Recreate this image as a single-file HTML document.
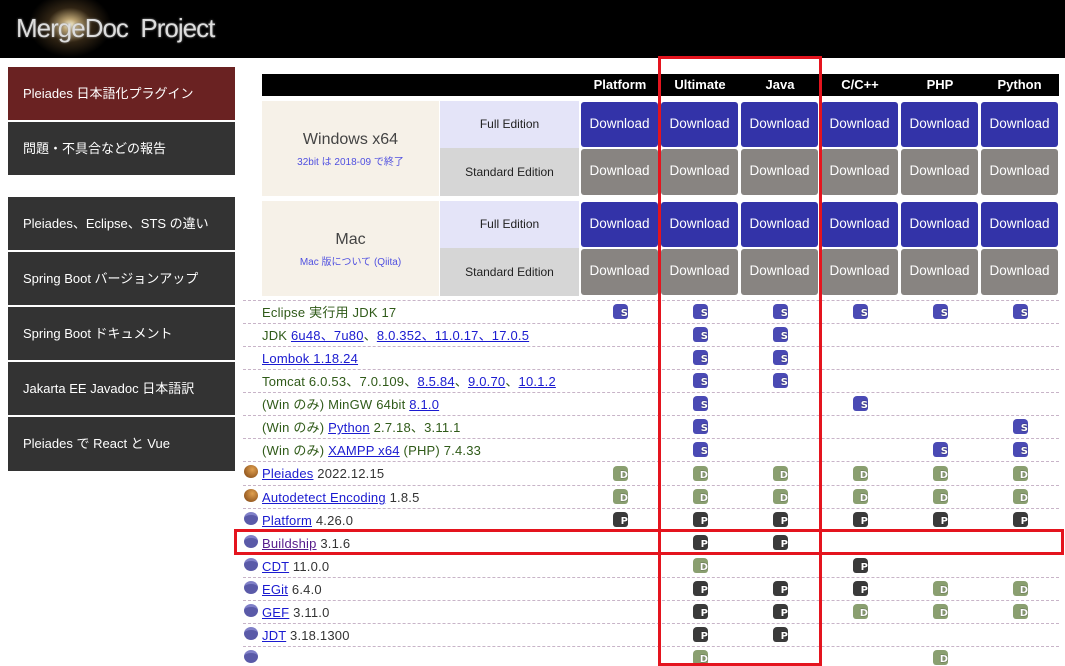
<!DOCTYPE html>
<html><head><meta charset="utf-8">
<style>
*{margin:0;padding:0;box-sizing:border-box}
body{width:1065px;height:653px;overflow:hidden;background:#fff;position:relative;font-family:"Liberation Sans","Noto Sans CJK JP",sans-serif;font-size:13px}
.a{position:absolute}
#hdr{left:0;top:0;width:1065px;height:58px;background:#000}
#glow{left:25px;top:-10px;width:90px;height:70px;background:radial-gradient(ellipse at center,rgba(255,250,220,1) 0,rgba(230,200,140,.8) 12%,rgba(120,90,50,.4) 35%,rgba(0,0,0,0) 65%)}
#title{left:16px;top:13px;color:#ddd;font-size:26px;letter-spacing:-1px;text-shadow:0 0 2px #888}
.side{left:8px;width:227px;height:53px;background:#333;color:#fff;font-size:13px;padding-left:15px;line-height:53px}
.th{top:74px;height:22px;background:#000;color:#fff;font-weight:bold;font-size:13px;line-height:22px;text-align:center}
.btn{width:77px;color:#fff;border-radius:3px;text-align:center;font-size:13.5px}
.bl{background:#3333a8;height:45px;line-height:44px}
.gr{background:#888481;height:46px;line-height:44px}
.os{left:262px;width:177px;height:94px;background:#f6f1e8;text-align:center;color:#444}
.fe{left:440px;width:139px;background:#e4e4f8;text-align:center;color:#222;font-size:12px}
.se{left:440px;width:139px;background:#d6d6d6;text-align:center;color:#222;font-size:12px}
.ln{left:243px;width:816px;height:0;border-top:1px dashed #c8b4c8}
.rt{left:262px;font-size:13px;color:#2f5a18;line-height:23px;white-space:nowrap;letter-spacing:0.2px}
.rt a{color:#1a1ad0;text-decoration:underline}
.rt .k{color:#333}
.ic{width:15px;height:15px;border-radius:4px 4px 3px 3px;font-size:10px;font-weight:bold;color:#fff;text-align:right;line-height:10px;padding-top:5px;padding-right:0;font-family:"DejaVu Sans",sans-serif;text-shadow:0 0 1px #000}
.S{background:#4a4ab4}
.D{background:#8a9f70}
.P{background:#3a3a3a}
.eb{left:244px;width:14px;height:13px;border-radius:50%;background:#5a5aa8;border-top:3px solid #8080c8}
.pb{left:244px;width:14px;height:13px;border-radius:50%;background:radial-gradient(circle at 60% 35%,#e0a050,#7a4010)}
.red{border:3px solid #e4141e}
</style></head><body>
<div id="hdr" class="a"></div>
<div id="glow" class="a"></div>
<div id="title" class="a">MergeDoc&nbsp; Project</div>

<div class="a side" style="top:67px;background:#6a2222">Pleiades 日本語化プラグイン</div>
<div class="a side" style="top:122px">問題・不具合などの報告</div>
<div class="a side" style="top:197px">Pleiades、Eclipse、STS の違い</div>
<div class="a side" style="top:252px">Spring Boot バージョンアップ</div>
<div class="a side" style="top:307px">Spring Boot ドキュメント</div>
<div class="a side" style="top:362px">Jakarta EE Javadoc 日本語訳</div>
<div class="a side" style="top:417px;height:54px">Pleiades で React と Vue</div>

<div class="a th" style="left:262px;width:318px"></div>
<div class="a th" style="left:580px;width:80px">Platform</div>
<div class="a th" style="left:660px;width:80px">Ultimate</div>
<div class="a th" style="left:740px;width:80px">Java</div>
<div class="a th" style="left:820px;width:80px">C/C++</div>
<div class="a th" style="left:900px;width:80px">PHP</div>
<div class="a th" style="left:980px;width:79px">Python</div>

<div class="a os" style="top:101px;height:95px;padding-top:30px"><div style="font-size:16px">Windows x64</div><div style="font-size:10px;color:#5050e0;margin-top:4px">32bit は 2018-09 で終了</div></div>
<div class="a fe" style="top:101px;height:47px;line-height:46px">Full Edition</div>
<div class="a se" style="top:148px;height:48px;line-height:48px">Standard Edition</div>
<div class="a os" style="top:201px;height:95px;padding-top:30px"><div style="font-size:16px">Mac</div><div style="font-size:10px;color:#5050e0;margin-top:4px">Mac 版について (Qiita)</div></div>
<div class="a fe" style="top:201px;height:47px;line-height:46px">Full Edition</div>
<div class="a se" style="top:248px;height:48px;line-height:48px">Standard Edition</div>

<div class="a btn bl" style="left:581px;top:102px">Download</div><div class="a btn gr" style="left:581px;top:149px">Download</div><div class="a btn bl" style="left:581px;top:202px">Download</div><div class="a btn gr" style="left:581px;top:249px">Download</div>
<div class="a btn bl" style="left:661px;top:102px">Download</div><div class="a btn gr" style="left:661px;top:149px">Download</div><div class="a btn bl" style="left:661px;top:202px">Download</div><div class="a btn gr" style="left:661px;top:249px">Download</div>
<div class="a btn bl" style="left:741px;top:102px">Download</div><div class="a btn gr" style="left:741px;top:149px">Download</div><div class="a btn bl" style="left:741px;top:202px">Download</div><div class="a btn gr" style="left:741px;top:249px">Download</div>
<div class="a btn bl" style="left:821px;top:102px">Download</div><div class="a btn gr" style="left:821px;top:149px">Download</div><div class="a btn bl" style="left:821px;top:202px">Download</div><div class="a btn gr" style="left:821px;top:249px">Download</div>
<div class="a btn bl" style="left:901px;top:102px">Download</div><div class="a btn gr" style="left:901px;top:149px">Download</div><div class="a btn bl" style="left:901px;top:202px">Download</div><div class="a btn gr" style="left:901px;top:249px">Download</div>
<div class="a btn bl" style="left:981px;top:102px">Download</div><div class="a btn gr" style="left:981px;top:149px">Download</div><div class="a btn bl" style="left:981px;top:202px">Download</div><div class="a btn gr" style="left:981px;top:249px">Download</div>

<div class="a ln" style="top:300px"></div><div class="a ln" style="top:323px"></div><div class="a ln" style="top:346px"></div><div class="a ln" style="top:369px"></div><div class="a ln" style="top:392px"></div><div class="a ln" style="top:415px"></div><div class="a ln" style="top:438px"></div><div class="a ln" style="top:461px"></div><div class="a ln" style="top:485px"></div><div class="a ln" style="top:508px"></div><div class="a ln" style="top:531px"></div><div class="a ln" style="top:554px"></div><div class="a ln" style="top:577px"></div><div class="a ln" style="top:600px"></div><div class="a ln" style="top:623px"></div><div class="a ln" style="top:646px"></div>

<div class="a rt" style="top:301px">Eclipse 実行用 JDK 17</div>
<div class="a rt" style="top:324px">JDK <a>6u48、7u80</a>、<a>8.0.352、11.0.17、17.0.5</a></div>
<div class="a rt" style="top:347px"><a>Lombok 1.18.24</a></div>
<div class="a rt" style="top:370px">Tomcat 6.0.53、7.0.109、<a>8.5.84</a>、<a>9.0.70</a>、<a>10.1.2</a></div>
<div class="a rt" style="top:393px">(Win のみ) MinGW 64bit <a>8.1.0</a></div>
<div class="a rt" style="top:416px">(Win のみ) <a>Python</a> 2.7.18、3.11.1</div>
<div class="a rt" style="top:439px">(Win のみ) <a>XAMPP x64</a> (PHP) 7.4.33</div>
<div class="a rt" style="top:462px"><a>Pleiades</a> <span class="k">2022.12.15</span></div>
<div class="a rt" style="top:486px"><a>Autodetect Encoding</a> <span class="k">1.8.5</span></div>
<div class="a rt" style="top:509px"><a>Platform</a> <span class="k">4.26.0</span></div>
<div class="a rt" style="top:532px"><a style="color:#551a8b">Buildship</a> <span class="k">3.1.6</span></div>
<div class="a rt" style="top:555px"><a>CDT</a> <span class="k">11.0.0</span></div>
<div class="a rt" style="top:578px"><a>EGit</a> <span class="k">6.4.0</span></div>
<div class="a rt" style="top:601px"><a>GEF</a> <span class="k">3.11.0</span></div>
<div class="a rt" style="top:624px"><a>JDT</a> <span class="k">3.18.1300</span></div>

<div class="a pb" style="top:465px"></div><div class="a pb" style="top:489px"></div>
<div class="a eb" style="top:512px"></div><div class="a eb" style="top:535px"></div><div class="a eb" style="top:558px"></div><div class="a eb" style="top:581px"></div><div class="a eb" style="top:604px"></div><div class="a eb" style="top:627px"></div><div class="a eb" style="top:650px"></div>

<div class="a ic S" style="left:613px;top:304px">S</div><div class="a ic S" style="left:693px;top:304px">S</div><div class="a ic S" style="left:773px;top:304px">S</div><div class="a ic S" style="left:853px;top:304px">S</div><div class="a ic S" style="left:933px;top:304px">S</div><div class="a ic S" style="left:1013px;top:304px">S</div>
<div class="a ic S" style="left:693px;top:327px">S</div><div class="a ic S" style="left:773px;top:327px">S</div>
<div class="a ic S" style="left:693px;top:350px">S</div><div class="a ic S" style="left:773px;top:350px">S</div>
<div class="a ic S" style="left:693px;top:373px">S</div><div class="a ic S" style="left:773px;top:373px">S</div>
<div class="a ic S" style="left:693px;top:396px">S</div><div class="a ic S" style="left:853px;top:396px">S</div>
<div class="a ic S" style="left:693px;top:419px">S</div><div class="a ic S" style="left:1013px;top:419px">S</div>
<div class="a ic S" style="left:693px;top:442px">S</div><div class="a ic S" style="left:933px;top:442px">S</div><div class="a ic S" style="left:1013px;top:442px">S</div>
<div class="a ic D" style="left:613px;top:466px">D</div><div class="a ic D" style="left:693px;top:466px">D</div><div class="a ic D" style="left:773px;top:466px">D</div><div class="a ic D" style="left:853px;top:466px">D</div><div class="a ic D" style="left:933px;top:466px">D</div><div class="a ic D" style="left:1013px;top:466px">D</div>
<div class="a ic D" style="left:613px;top:489px">D</div><div class="a ic D" style="left:693px;top:489px">D</div><div class="a ic D" style="left:773px;top:489px">D</div><div class="a ic D" style="left:853px;top:489px">D</div><div class="a ic D" style="left:933px;top:489px">D</div><div class="a ic D" style="left:1013px;top:489px">D</div>
<div class="a ic P" style="left:613px;top:512px">P</div><div class="a ic P" style="left:693px;top:512px">P</div><div class="a ic P" style="left:773px;top:512px">P</div><div class="a ic P" style="left:853px;top:512px">P</div><div class="a ic P" style="left:933px;top:512px">P</div><div class="a ic P" style="left:1013px;top:512px">P</div>
<div class="a ic P" style="left:693px;top:535px">P</div><div class="a ic P" style="left:773px;top:535px">P</div>
<div class="a ic D" style="left:693px;top:558px">D</div><div class="a ic P" style="left:853px;top:558px">P</div>
<div class="a ic P" style="left:693px;top:581px">P</div><div class="a ic P" style="left:773px;top:581px">P</div><div class="a ic P" style="left:853px;top:581px">P</div><div class="a ic D" style="left:933px;top:581px">D</div><div class="a ic D" style="left:1013px;top:581px">D</div>
<div class="a ic P" style="left:693px;top:604px">P</div><div class="a ic P" style="left:773px;top:604px">P</div><div class="a ic D" style="left:853px;top:604px">D</div><div class="a ic D" style="left:933px;top:604px">D</div><div class="a ic D" style="left:1013px;top:604px">D</div>
<div class="a ic P" style="left:693px;top:627px">P</div><div class="a ic P" style="left:773px;top:627px">P</div>
<div class="a ic D" style="left:693px;top:650px">D</div><div class="a ic D" style="left:933px;top:650px">D</div>

<div class="a red" style="left:658px;top:56px;width:164px;height:610px"></div>
<div class="a red" style="left:234px;top:529px;width:830px;height:26px"></div>
</body></html>
